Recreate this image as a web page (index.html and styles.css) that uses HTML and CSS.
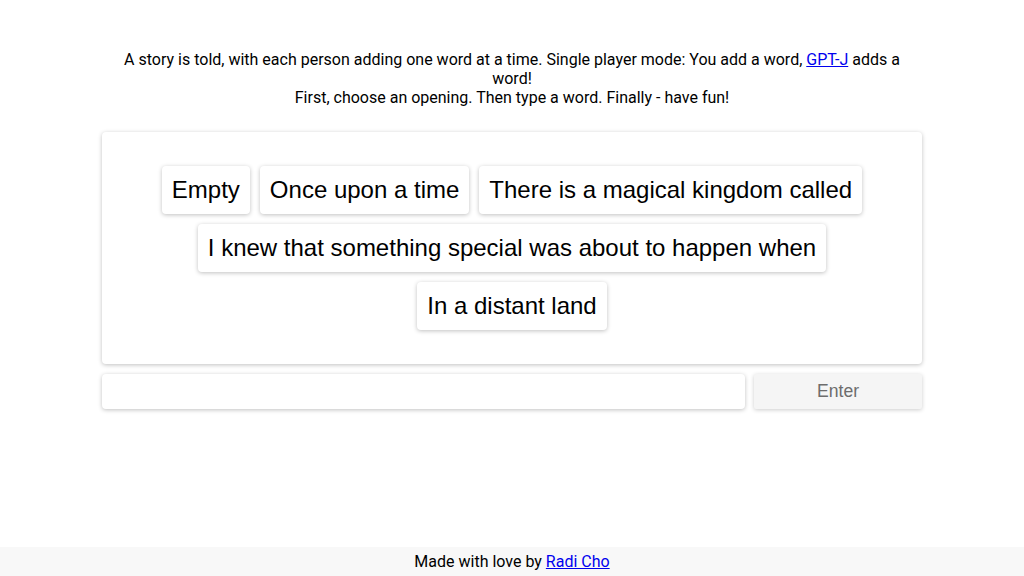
FILE: index.html
```html
<!DOCTYPE html>
<html>
    <head>
        <meta charset="utf-8">
        <title>Story</title>

        <link rel="stylesheet" href="styles.css">
    </head>

    <body>

        <div class="page-wrapper">
            <p class="intro">
                A story is told, with each person adding one word at a time. Single player mode: You add a word, <a href="#">GPT-J</a> adds a word!<br>
                First, choose an opening. Then type a word. Finally - have fun!
            </p>

            <section class="story">
                <button class="opening">Empty</button>
                <button class="opening">Once upon a time</button>
                <button class="opening">There is a magical kingdom called</button>
                <button class="opening">I knew that something special was about to happen when</button>
                <button class="opening">In a distant land</button>
            </section>

            <form class="word-form">
                <input type="text" class="word-input">
                <button type="button" class="word-button" disabled>Enter</button>
            </form>
        </div>

        <footer class="footer">
            Made with love by <a href="#">Radi Cho</a>
        </footer>

    </body>
</html>
```

FILE: styles.css
```css
/* Base */

body {
    margin: 0;
    min-height: 576px;
    display: flex;
    flex-direction: column;
    font-family: Roboto, "Liberation Sans", sans-serif;
    font-size: 16px;
    color: #000;
}

a {
    color: #0000ee;
}

.page-wrapper {
    flex: 1;
    width: 820px;
    margin: 0 auto;
    padding-top: 50px;
}

/* Intro */

.intro {
    margin: 0 0 25px;
    padding: 0 20px;
    text-align: center;
    line-height: 19px;
}

/* Story openings */

.story {
    display: flex;
    flex-wrap: wrap;
    justify-content: center;
    gap: 10px;
    padding: 34px 40px;
    border-radius: 4px;
    box-shadow: 0 1px 4px rgba(0, 0, 0, 0.25);
    background: #fff;
}

.opening {
    font-family: "Liberation Sans", Arial, sans-serif;
    font-size: 24px;
    line-height: 28px;
    padding: 10px 10px;
    border: none;
    border-radius: 4px;
    background: #fff;
    color: #000;
    box-shadow: 0 1px 4px rgba(0, 0, 0, 0.25);
}

/* Word input */

.word-form {
    display: flex;
    gap: 9px;
    margin-top: 10px;
}

.word-input {
    flex: 1;
    height: 35px;
    box-sizing: border-box;
    border: none;
    border-radius: 4px;
    box-shadow: 0 1px 4px rgba(0, 0, 0, 0.25);
    font-size: 16px;
}

.word-button {
    width: 168px;
    height: 35px;
    border: none;
    border-radius: 2px;
    background: #f5f5f5;
    color: #6d6d6d;
    font-family: "Liberation Sans", Arial, sans-serif;
    font-size: 17.6px;
    box-shadow: 0 1px 4px rgba(0, 0, 0, 0.2);
}

/* Footer */

.footer {
    height: 29px;
    line-height: 29px;
    text-align: center;
    background: #f8f8f8;
}
```
